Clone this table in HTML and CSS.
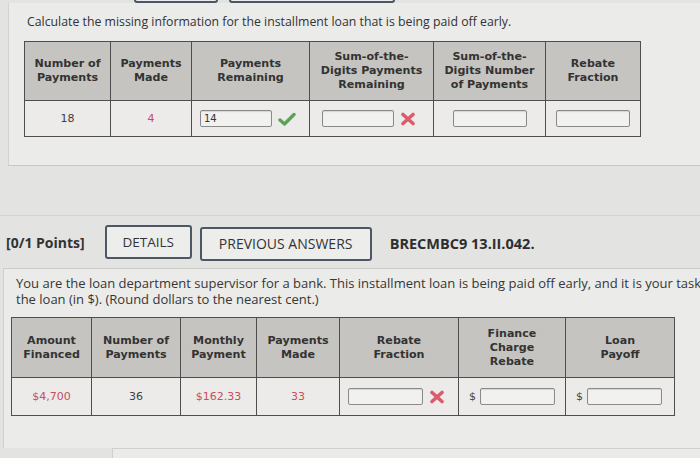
FILE: index.html
```html
<!DOCTYPE html>
<html>
<head>
<meta charset="utf-8">
<link rel="stylesheet" href="styles.css">
</head>
<body>
<div class="top-buttons">
  <div class="tbtn tbtn-a"></div>
  <div class="tbtn tbtn-b"></div>
</div>

<div class="panel panel-one">
  <p class="lead">Calculate the missing information for the installment loan that is being paid off early.</p>
  <table class="grid grid-one">
    <colgroup>
      <col class="c86"><col class="c81"><col class="c118"><col class="c124"><col class="c112"><col class="c95">
    </colgroup>
    <thead>
      <tr>
        <th>Number of<br>Payments</th>
        <th>Payments<br>Made</th>
        <th>Payments<br>Remaining</th>
        <th>Sum-of-the-<br>Digits Payments<br>Remaining</th>
        <th>Sum-of-the-<br>Digits Number<br>of Payments</th>
        <th>Rebate<br>Fraction</th>
      </tr>
    </thead>
    <tbody>
      <tr>
        <td>18</td>
        <td class="red">4</td>
        <td class="in-cell"><span class="box filled">14</span><svg class="mark" width="18" height="14" viewBox="0 0 18 14"><path d="M2 8 L6.5 12 L16 2.5" fill="none" stroke="#5aa356" stroke-width="3.4" stroke-linecap="round" stroke-linejoin="round"/></svg></td>
        <td class="in-cell"><span class="box"></span><svg class="mark" width="16" height="14" viewBox="0 0 16 14"><path d="M3 2.5 L13 11.5 M13 2.5 L3 11.5" stroke="#d95d6d" stroke-width="3.6" stroke-linecap="round"/></svg></td>
        <td class="in-cell"><span class="box"></span></td>
        <td class="in-cell"><span class="box"></span></td>
      </tr>
    </tbody>
  </table>
</div>

<div class="question">
  <div class="q-head">
    <span class="points">[0/1 Points]</span>
    <span class="btn btn-details">DETAILS</span>
    <span class="btn btn-prev">PREVIOUS ANSWERS</span>
    <span class="qid">BRECMBC9 13.II.042.</span>
  </div>
  <div class="panel panel-two">
    <p class="body-text">You are the loan department supervisor for a bank. This installment loan is being paid off early, and it is your task to calculate the missing information for<br>the loan (in $). (Round dollars to the nearest cent.)</p>
    <table class="grid grid-two">
      <colgroup>
        <col class="d80"><col class="d89"><col class="d76"><col class="d83"><col class="d119"><col class="d107"><col class="d109">
      </colgroup>
      <thead>
        <tr>
          <th>Amount<br>Financed</th>
          <th>Number of<br>Payments</th>
          <th>Monthly<br>Payment</th>
          <th>Payments<br>Made</th>
          <th>Rebate<br>Fraction</th>
          <th>Finance<br>Charge<br>Rebate</th>
          <th>Loan<br>Payoff</th>
        </tr>
      </thead>
      <tbody>
        <tr>
          <td class="red">$4,700</td>
          <td>36</td>
          <td class="red">$162.33</td>
          <td class="red">33</td>
          <td class="in-cell"><span class="box"></span><svg class="mark" width="16" height="14" viewBox="0 0 16 14"><path d="M3 2.5 L13 11.5 M13 2.5 L3 11.5" stroke="#d95d6d" stroke-width="3.6" stroke-linecap="round"/></svg></td>
          <td class="in-cell"><span class="dollar">$</span><span class="box box-dollar"></span></td>
          <td class="in-cell"><span class="dollar">$</span><span class="box box-dollar"></span></td>
        </tr>
      </tbody>
    </table>
  </div>
  <div class="next-box"></div>
</div>
</body>
</html>
```

FILE: styles.css
```css
html, body {
  margin: 0;
  padding: 0;
}
body {
  width: 700px;
  height: 458px;
  overflow: hidden;
  background: #e3e3e1;
  color: #363636;
  font-family: "Open Sans", "Liberation Sans", sans-serif;
}

.top-buttons {
  height: 3px;
  display: flex;
  align-items: flex-end;
  gap: 11px;
  padding-left: 134px;
  overflow: hidden;
}
.tbtn {
  height: 30px;
  border: 2px solid #4c5763;
  border-radius: 3px;
  box-sizing: border-box;
  background: #ececec;
  flex: none;
}
.tbtn-a { width: 84px; }
.tbtn-b { width: 166px; }

.panel {
  background: #ebebe9;
}
.panel-one {
  margin-left: 8px;
  height: 163px;
  box-sizing: border-box;
  padding: 11px 0 0 16px;
  border-left: 1px solid #d2d2d0;
  border-bottom: 1px solid #c6c6c4;
}
.lead {
  margin: 0 0 11px 2px;
  font-size: 12.3px;
  line-height: 16px;
  color: #333;
}

.grid {
  border-collapse: collapse;
  table-layout: fixed;
  font-family: "DejaVu Sans", Verdana, sans-serif;
}
.grid th, .grid td {
  border: 1px solid #4e4e4e;
  text-align: center;
  padding: 0;
}
.grid th {
  background: #c5c4c0;
  font-weight: bold;
  font-size: 11.1px;
  line-height: 14px;
  color: #333;
}
.grid td {
  background: #ecebea;
  font-size: 11px;
  color: #404040;
}
.grid td.red {
  color: #c84e5c;
}
.grid-one {
  margin-left: -1px;
  width: 617px;
}
.grid-one thead tr { height: 59px; }
.grid-one tbody tr { height: 36px; }

.c86 { width: 86px; }
.c81 { width: 81px; }
.c118 { width: 118px; }
.c124 { width: 124px; }
.c112 { width: 112px; }
.c95 { width: 95px; }

.in-cell {
  white-space: nowrap;
}
.box {
  display: inline-block;
  vertical-align: middle;
  width: 72px;
  height: 17px;
  box-sizing: border-box;
  border: 1px solid #8a8a8a;
  border-radius: 2px;
  background: #f1f1f0;
  box-shadow: inset 0 1px 1px rgba(0,0,0,0.12);
  text-align: left;
  font-size: 10px;
  line-height: 15px;
  padding-left: 3px;
  color: #333;
}
.mark {
  display: inline-block;
  vertical-align: middle;
  margin-left: 6px;
}
.grid-one td.in-cell:nth-child(3) { text-align: left; padding-left: 8px; }
.grid-one td.in-cell:nth-child(4) { text-align: left; padding-left: 12px; }
.grid-one td.in-cell:nth-child(5) { text-align: center; }
.grid-one td.in-cell:nth-child(5) .box { width: 74px; }
.grid-one td.in-cell:nth-child(6) { text-align: center; }
.grid-one td.in-cell:nth-child(6) .box { width: 74px; }

.question {
  margin-top: 49px;
  border-top: 1px solid #d3d3d1;
}
.q-head {
  display: flex;
  align-items: center;
  height: 51px;
  padding-left: 6px;
  padding-top: 1px;
}
.points {
  font-weight: bold;
  font-size: 14px;
  color: #333;
  margin-right: 20px;
}
.btn {
  display: inline-flex;
  align-items: center;
  justify-content: center;
  box-sizing: border-box;
  border: 2px solid #4c5866;
  border-radius: 3px;
  background: #ededec;
  font-size: 13.5px;
  color: #333;
  height: 34px;
}
.btn-details {
  width: 87px;
  margin-top: -2px;
  margin-right: 8px;
}
.btn-prev {
  width: 172px;
  font-size: 14px;
  margin-top: 2px;
  margin-right: 18px;
}
.qid {
  font-weight: bold;
  font-size: 14.5px;
  color: #2e2e2e;
  margin-top: 2px;
}

.panel-two {
  margin-left: 3px;
  height: 180px;
  box-sizing: border-box;
  border-top: 1px solid #cdcdcb;
  border-left: 1px solid #d0d0ce;
  padding: 6px 0 0 7px;
  overflow: hidden;
}
.body-text {
  margin: 0 0 10px 5px;
  font-size: 13px;
  line-height: 16px;
  white-space: nowrap;
  color: #363636;
}
.grid-two {
  width: 664px;
}
.grid-two thead tr { height: 60px; }
.grid-two tbody tr { height: 38px; }
.d80 { width: 80px; }
.d89 { width: 89px; }
.d76 { width: 76px; }
.d83 { width: 83px; }
.d119 { width: 119px; }
.d107 { width: 107px; }
.d109 { width: 109px; }
.grid-two td.in-cell:nth-child(5) { text-align: left; padding-left: 8px; }
.grid-two td.in-cell:nth-child(5) .box { width: 75px; }
.grid-two td.in-cell:nth-child(6),
.grid-two td.in-cell:nth-child(7) { text-align: left; padding-left: 10px; }
.dollar {
  display: inline-block;
  vertical-align: middle;
  font-size: 11px;
  color: #444;
  margin-right: 4px;
}
.box-dollar {
  width: 75px;
}

.next-box {
  margin: 0 0 0 112px;
  height: 20px;
  border-top: 1px solid #cfcfcd;
  border-left: 1px solid #cfcfcd;
  background: #ebebe9;
}
```
